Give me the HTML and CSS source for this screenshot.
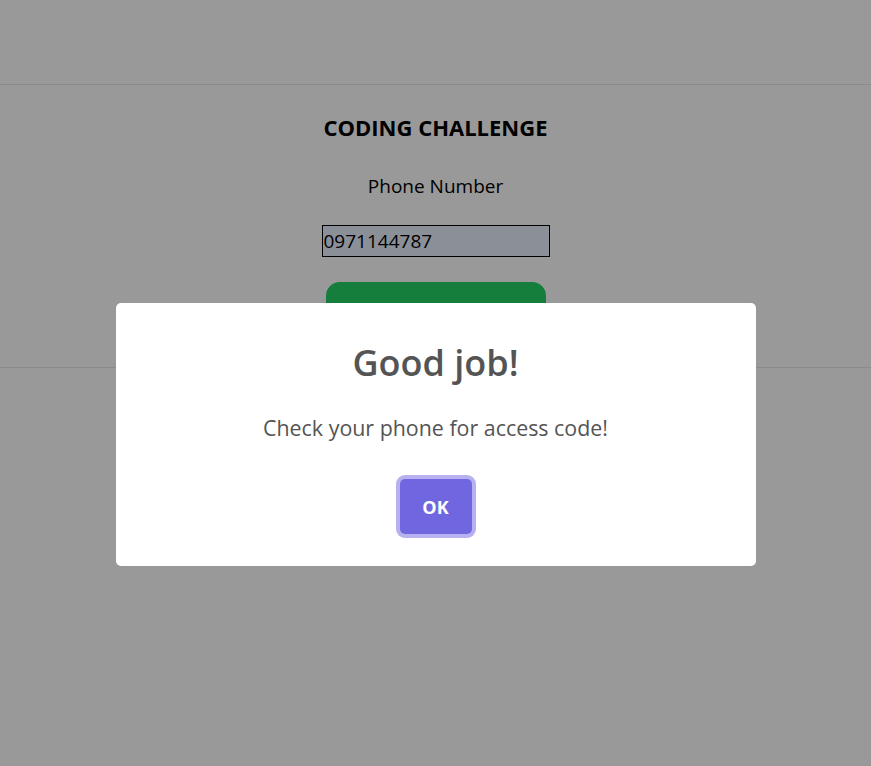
FILE: index.html
```html
<!DOCTYPE html>
<html lang="en">
<head>
<meta charset="utf-8">
<title>Coding Challenge</title>
<link rel="stylesheet" href="styles.css">
</head>
<body>
<header class="topbar"></header>
<main class="challenge">
  <h1 class="challenge-title">CODING CHALLENGE</h1>
  <label class="field-label" for="phone">Phone Number</label>
  <input class="phone-input" id="phone" type="text" value="0971144787">
  <button class="submit-btn" type="button">Submit</button>
</main>

<div class="overlay">
  <div class="dialog" role="dialog">
    <h2 class="dialog-title">Good job!</h2>
    <p class="dialog-text">Check your phone for access code!</p>
    <div class="dialog-actions">
      <button class="ok-btn" type="button">OK</button>
    </div>
  </div>
</div>
</body>
</html>
```

FILE: styles.css
```css
* { box-sizing: border-box; }

html, body {
  margin: 0;
  padding: 0;
  height: 100%;
}

body {
  background: #ffffff;
  font-family: "Open Sans", "Noto Sans", sans-serif;
  color: #000;
}

.topbar {
  height: 85px;
  border-bottom: 1px solid #e6e6e6;
}

.challenge {
  display: flex;
  flex-direction: column;
  align-items: center;
  border-bottom: 1px solid #e6e6e6;
  padding: 27px 0 25px;
}

.challenge-title {
  margin: 0;
  font-size: 22px;
  font-weight: 700;
  line-height: 30px;
}

.field-label {
  margin-top: 31px;
  font-size: 19px;
  line-height: 26px;
}

.phone-input {
  margin-top: 26px;
  width: 228px;
  height: 32px;
  border: 1px solid #000;
  background: #e8f0fe;
  padding: 0 0 0 1px;
  font-family: "Open Sans", "Noto Sans", sans-serif;
  font-size: 19px;
  color: #000;
  outline: none;
}

.submit-btn {
  margin-top: 25px;
  width: 220px;
  height: 60px;
  border: none;
  border-radius: 14px;
  background: #25d366;
  color: #fff;
  font-family: "Open Sans", "Noto Sans", sans-serif;
  font-size: 16px;
  font-weight: 700;
}

.overlay {
  position: fixed;
  inset: 0;
  background: rgba(0, 0, 0, 0.4);
  display: flex;
  justify-content: center;
  align-items: flex-start;
  padding-top: 303px;
}

.dialog {
  width: 640px;
  height: 263px;
  background: #fff;
  border-radius: 5px;
  display: flex;
  flex-direction: column;
  align-items: center;
  color: #545454;
}

.dialog-title {
  margin: 35px 0 0;
  font-size: 36px;
  font-weight: 600;
  line-height: 50px;
}

.dialog-text {
  margin: 26px 0 0;
  font-size: 21.4px;
  line-height: 28px;
}

.dialog-actions {
  margin-top: 37px;
}

.ok-btn {
  width: 72px;
  height: 55px;
  border: none;
  border-radius: 5px;
  background: #7066e0;
  color: #fff;
  font-family: "Open Sans", "Noto Sans", sans-serif;
  font-size: 18px;
  font-weight: 700;
  box-shadow: 0 0 0 4px rgba(112, 102, 224, 0.5);
}
```
